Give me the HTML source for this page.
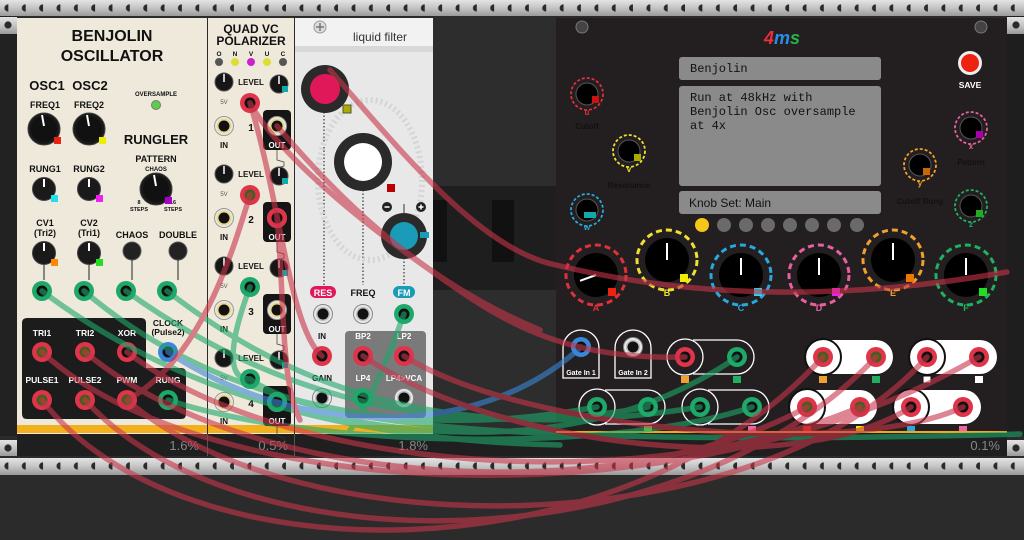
<!DOCTYPE html>
<html><head><meta charset="utf-8"><style>
html,body{margin:0;padding:0;background:#2a2a2a;width:1024px;height:540px;overflow:hidden}
svg{display:block}
text{font-family:"Liberation Sans",sans-serif;font-weight:bold}
</style></head><body>
<svg width="1024" height="540" viewBox="0 0 1024 540" xmlns="http://www.w3.org/2000/svg">
<defs>
<pattern id="holes" x="-9" y="0" width="17.35" height="16" patternUnits="userSpaceOnUse"><circle cx="17" cy="8" r="3.6" fill="#2a2a2a"/></pattern>
<linearGradient id="rail" x1="0" y1="0" x2="0" y2="1"><stop offset="0" stop-color="#e4e4e4"/><stop offset=".5" stop-color="#c4c4c4"/><stop offset="1" stop-color="#9a9a9a"/></linearGradient>
<g id="jk"><circle r="9.5" fill="#e8e8e8" stroke="#888" stroke-width="1"/><circle r="7" fill="#bbb"/><circle r="5.5" fill="#111"/></g>
<g id="jky"><circle r="9.5" fill="#e8e8e8" stroke="#999"/><circle r="7.5" fill="#e8d98a"/><circle r="5.5" fill="#111"/></g>
<g id="pl"><circle r="10" fill="currentColor"/><circle r="5.5" fill="#111"/></g>
<g id="plg"><circle r="10" fill="currentColor"/><circle r="5.5" fill="#4a5d1e"/></g>
<g id="kb"><circle r="16" fill="#1a1a1a" stroke="#444"/><circle r="13" fill="#111"/><line x1="0" y1="-3" x2="-2" y2="-14" stroke="#fff" stroke-width="2"/></g>
<g id="ks"><circle r="11.5" fill="#1a1a1a" stroke="#444"/><line x1="0" y1="-2" x2="0" y2="-10" stroke="#fff" stroke-width="2"/></g>
<g id="kt"><circle r="9" fill="#161616" stroke="#555"/><line x1="0" y1="0" x2="0" y2="-8" stroke="#fff" stroke-width="1.5"/></g>
<g id="big"><circle r="22" fill="#000"/><line x1="0" y1="0" x2="0" y2="-17" stroke="#fff" stroke-width="2"/></g>
</defs>

<rect width="1024" height="540" fill="#2b2b2b"/>
<rect x="433" y="16" width="123" height="418" fill="#2d2d2d"/>
<rect x="433" y="186" width="123" height="104" fill="#1e1e1e"/>
<rect x="492" y="200" width="22" height="62" fill="#111"/>
<rect x="433" y="200" width="14" height="62" fill="#111"/>
<rect x="0" y="16" width="17" height="420" fill="#222"/>
<rect x="1007" y="16" width="17" height="420" fill="#1e1e1e"/>

<rect x="0" y="0" width="1024" height="16" fill="url(#rail)"/>
<rect x="0" y="0" width="1024" height="16" fill="url(#holes)"/>
<rect x="0" y="17" width="17" height="17" fill="url(#rail)"/><circle cx="8" cy="25" r="3.6" fill="#2a2a2a"/>
<rect x="1007" y="17" width="17" height="17" fill="url(#rail)"/><circle cx="1016" cy="25" r="3.6" fill="#2a2a2a"/>
<rect x="0" y="440" width="17" height="16" fill="url(#rail)"/><circle cx="8" cy="448" r="3.6" fill="#2a2a2a"/>
<rect x="1007" y="440" width="17" height="16" fill="url(#rail)"/><circle cx="1016" cy="448" r="3.6" fill="#2a2a2a"/>
<g transform="translate(0,458)"><rect x="0" y="0" width="1024" height="17" fill="url(#rail)"/><rect x="0" y="0" width="1024" height="16" fill="url(#holes)"/></g>

<rect x="17" y="434" width="990" height="22" fill="#1f1f1f"/>
<line x1="207.5" y1="434" x2="207.5" y2="456" stroke="#555"/><line x1="294.5" y1="434" x2="294.5" y2="456" stroke="#555"/>
<g font-size="13" fill="#888" text-anchor="end">
<text x="199" y="450" style="font-weight:normal">1.6%</text><text x="288" y="450" style="font-weight:normal">0.5%</text><text x="428" y="450" style="font-weight:normal">1.8%</text><text x="1000" y="450" style="font-weight:normal">0.1%</text></g>

<!-- BENJOLIN -->
<rect x="17" y="18" width="190" height="416" fill="#efe9dc"/>
<rect x="17" y="425" width="190" height="8" fill="#f2b01e"/>
<g text-anchor="middle" fill="#111">
<text x="112" y="41" font-size="16">BENJOLIN</text><text x="112" y="61" font-size="16">OSCILLATOR</text>
<text x="47" y="90" font-size="13">OSC1</text><text x="90" y="90" font-size="13">OSC2</text>
<text x="45" y="108" font-size="9">FREQ1</text><text x="89" y="108" font-size="9">FREQ2</text>
<text x="156" y="96" font-size="6">OVERSAMPLE</text>
<text x="156" y="144" font-size="13">RUNGLER</text>
<text x="156" y="162" font-size="9">PATTERN</text><text x="156" y="171" font-size="6">CHAOS</text>
<text x="139" y="204" font-size="5.5">8</text><text x="139" y="211" font-size="5.5">STEPS</text>
<text x="173" y="204" font-size="5.5">16</text><text x="173" y="211" font-size="5.5">STEPS</text>
<text x="45" y="172" font-size="9">RUNG1</text><text x="89" y="172" font-size="9">RUNG2</text>
<text x="45" y="226" font-size="9">CV1</text><text x="45" y="236" font-size="9">(Tri2)</text>
<text x="89" y="226" font-size="9">CV2</text><text x="89" y="236" font-size="9">(Tri1)</text>
<text x="132" y="238" font-size="9">CHAOS</text><text x="178" y="238" font-size="9">DOUBLE</text>
</g>
<circle cx="156" cy="105" r="4.5" fill="#5ccf4a" stroke="#777"/>
<use href="#kb" x="44" y="129"/><rect x="54" y="137" width="7" height="7" fill="#e21"/>
<use href="#kb" x="89" y="129"/><rect x="99" y="137" width="7" height="7" fill="#ee0"/>
<use href="#kb" x="156" y="189"/><rect x="165" y="197" width="7" height="7" fill="#a0c"/>
<use href="#ks" x="44" y="189"/><rect x="51" y="195" width="7" height="7" fill="#2de"/>
<use href="#ks" x="89" y="189"/><rect x="96" y="195" width="7" height="7" fill="#e2e"/>
<use href="#ks" x="44" y="253"/><rect x="51" y="259" width="7" height="7" fill="#f80"/>
<use href="#ks" x="89" y="253"/><rect x="96" y="259" width="7" height="7" fill="#2d2"/>
<circle cx="132" cy="251" r="9" fill="#222" stroke="#555"/><circle cx="178" cy="251" r="9" fill="#222" stroke="#555"/>
<g stroke="#222"><line x1="44" y1="265" x2="44" y2="280"/><line x1="89" y1="265" x2="89" y2="280"/><line x1="132" y1="260" x2="132" y2="280"/><line x1="178" y1="260" x2="178" y2="280"/></g>
<g style="color:#1ea86a"><use href="#pl" x="42" y="291"/><use href="#pl" x="84" y="291"/><use href="#pl" x="126" y="291"/><use href="#pl" x="167" y="291"/></g>
<path d="M27,318 H141 Q146,318 146,323 V368 H181 Q186,368 186,373 V414 Q186,419 181,419 H27 Q22,419 22,414 V323 Q22,318 27,318Z" fill="#1c1c1c"/>
<g text-anchor="middle" fill="#fff" font-size="8.5">
<text x="42" y="336">TRI1</text><text x="85" y="336">TRI2</text><text x="127" y="336">XOR</text>
<text x="42" y="383">PULSE1</text><text x="85" y="383">PULSE2</text><text x="127" y="383">PWM</text><text x="168" y="383">RUNG</text>
<text x="168" y="326" fill="#111">CLOCK</text><text x="168" y="335" fill="#111">(Pulse2)</text></g>
<g style="color:#e0344a"><use href="#plg" x="42" y="352"/><use href="#plg" x="85" y="352"/><use href="#pl" x="127" y="352"/>
<use href="#plg" x="42" y="400"/><use href="#plg" x="85" y="400"/><use href="#plg" x="127" y="400"/></g>
<use href="#pl" x="168" y="352" style="color:#3a86d8"/>
<use href="#pl" x="168" y="400" style="color:#1ea86a"/>

<!-- QUAD VC -->
<rect x="208" y="18" width="86" height="416" fill="#efe9dc"/>
<rect x="208" y="425" width="86" height="8" fill="#f2b01e"/>
<g text-anchor="middle" fill="#111"><text x="251" y="33" font-size="12">QUAD VC</text><text x="251" y="45" font-size="12">POLARIZER</text>
<g font-size="6.5"><text x="219" y="56">O</text><text x="235" y="56">N</text><text x="251" y="56">V</text><text x="267" y="56">U</text><text x="283" y="56">C</text></g></g>
<circle cx="219" cy="62" r="4" fill="#555"/><circle cx="235" cy="62" r="4" fill="#dd3"/><circle cx="251" cy="62" r="4" fill="#c2c"/><circle cx="267" cy="62" r="4" fill="#dd3"/><circle cx="283" cy="62" r="4" fill="#555"/>
<g id="qs">
<use href="#kt" x="224" y="82"/><text x="251" y="85" font-size="8" text-anchor="middle" fill="#111">LEVEL</text>
<use href="#kt" x="279" y="84"/><rect x="282" y="86" width="6" height="6" fill="#1aa"/>
<text x="224" y="104" font-size="6" text-anchor="middle" fill="#555" style="font-weight:normal">5V</text>
<use href="#jky" x="224" y="126"/><text x="224" y="148" font-size="8" text-anchor="middle" fill="#111">IN</text>
<rect x="263" y="110" width="28" height="40" rx="4" fill="#151515"/><use href="#jky" x="277" y="126"/>
<text x="277" y="148" font-size="8" text-anchor="middle" fill="#fff">OUT</text>
<path d="M277,150 V160 L284,162 V166 L277,168 V178" stroke="#333" fill="none" stroke-width=".7"/>
</g>
<use href="#qs" y="92"/><use href="#qs" y="184"/><use href="#qs" y="276"/>
<g font-size="10" text-anchor="middle" fill="#111"><text x="251" y="131">1</text><text x="251" y="223">2</text><text x="251" y="315">3</text><text x="251" y="407">4</text></g>
<use href="#pl" x="250" y="103" style="color:#e0344a"/><use href="#plg" x="250" y="195" style="color:#e0344a"/>
<use href="#pl" x="277" y="218" style="color:#e0344a"/>
<use href="#pl" x="250" y="287" style="color:#1ea86a"/><use href="#pl" x="250" y="379" style="color:#1ea86a"/>
<use href="#pl" x="277" y="402" style="color:#1ea86a"/>

<!-- LIQUID FILTER -->
<rect x="295" y="18" width="138" height="416" fill="#e8e8e8"/>
<rect x="295" y="18" width="138" height="28" fill="#f2f2f2"/><rect x="295" y="46" width="138" height="6" fill="#d8d8d8"/>
<text x="380" y="41" font-size="12" text-anchor="middle" fill="#333" style="font-weight:normal">liquid filter</text>
<circle cx="320" cy="27" r="6" fill="#ddd" stroke="#999"/><path d="M316,27h8M320,23v8" stroke="#777" stroke-width="1.5"/>
<g stroke="#333" stroke-width="1.2" stroke-dasharray="1.5 2"><line x1="324" y1="112" x2="324" y2="285"/><line x1="363" y1="190" x2="363" y2="285"/><line x1="404" y1="258" x2="404" y2="285"/></g>
<ellipse cx="370" cy="180" rx="52" ry="80" fill="none" stroke="#d5d5d5" stroke-width="6" stroke-dasharray="2 3"/>
<circle cx="325" cy="89" r="24" fill="#2a2a2a"/><circle cx="325" cy="89" r="15" fill="#e0185a"/><rect x="343" y="105" width="8" height="8" fill="#aa0" stroke="#553"/>
<circle cx="363" cy="162" r="29" fill="#2a2a2a"/><circle cx="363" cy="162" r="19" fill="#fff"/><rect x="387" y="184" width="8" height="8" fill="#b00"/>
<circle cx="404" cy="236" r="23" fill="#2a2a2a"/><circle cx="404" cy="236" r="14" fill="#1a9cb8"/><rect x="420" y="232" width="9" height="6" fill="#1a9cb8"/>
<circle cx="387" cy="207" r="5" fill="#222"/><path d="M384.5,207h5" stroke="#fff" stroke-width="1.5"/>
<circle cx="421" cy="207" r="5" fill="#222"/><path d="M418.5,207h5M421,204.5v5" stroke="#fff" stroke-width="1.5"/>
<line x1="404" y1="204" x2="404" y2="214" stroke="#333"/>
<rect x="310" y="286" width="26" height="12" rx="6" fill="#e0185a"/><text x="323" y="296" font-size="9" text-anchor="middle" fill="#fff">RES</text>
<text x="363" y="296" font-size="9" text-anchor="middle" fill="#111">FREQ</text>
<rect x="393" y="286" width="22" height="12" rx="6" fill="#1a9cb8"/><text x="404" y="296" font-size="9" text-anchor="middle" fill="#fff">FM</text>
<rect x="345" y="331" width="81" height="87" rx="4" fill="#7a7a7a"/>
<use href="#jk" x="323" y="314"/><use href="#jk" x="363" y="314"/><use href="#pl" x="404" y="314" style="color:#1ea86a"/>
<g font-size="8" text-anchor="middle"><text x="322" y="339" fill="#111">IN</text><text x="363" y="339" fill="#fff">BP2</text><text x="404" y="339" fill="#fff">LP2</text>
<text x="322" y="381" fill="#111">GAIN</text><text x="363" y="381" fill="#fff">LP4</text><text x="404" y="381" fill="#fff">LP4&gt;VCA</text></g>
<g style="color:#e0344a"><use href="#pl" x="322" y="356"/><use href="#pl" x="363" y="356"/><use href="#pl" x="404" y="356"/></g>
<use href="#jk" x="322" y="398"/><use href="#pl" x="363" y="398" style="color:#1ea86a"/><use href="#jk" x="404" y="398"/>
<rect x="295" y="425" width="138" height="8" fill="#f2b01e"/>

<!-- 4MS -->
<rect x="556" y="18" width="451" height="416" fill="#231f20"/>
<rect x="556" y="431" width="451" height="2" fill="#f2a81e"/>
<circle cx="582" cy="27" r="6" fill="#444" stroke="#777"/><circle cx="981" cy="27" r="6" fill="#444" stroke="#777"/>
<text x="782" y="44" font-size="18" text-anchor="middle" font-style="italic"><tspan fill="#e8303a">4</tspan><tspan fill="#2a8ee8">m</tspan><tspan fill="#27b24a">s</tspan></text>
<rect x="679" y="57" width="202" height="23" rx="3" fill="#8a8a8a"/>
<rect x="679" y="86" width="202" height="100" rx="3" fill="#8a8a8a"/>
<rect x="679" y="191" width="202" height="23" rx="3" fill="#8a8a8a"/>
<g font-size="12" fill="#111"><text x="690" y="72" style="font-family:'Liberation Mono';font-weight:normal">Benjolin</text>
<text x="690" y="101" style="font-family:'Liberation Mono';font-weight:normal">Run at 48kHz with</text>
<text x="690" y="115" style="font-family:'Liberation Mono';font-weight:normal">Benjolin Osc oversample</text>
<text x="690" y="129" style="font-family:'Liberation Mono';font-weight:normal">at 4x</text>
<text x="689" y="207" style="font-family:'Liberation Sans';font-weight:normal">Knob Set:  Main</text></g>
<circle cx="702" cy="225" r="7" fill="#f5c518"/>
<g fill="#6a6a6a"><circle cx="724" cy="225" r="7"/><circle cx="746" cy="225" r="7"/><circle cx="768" cy="225" r="7"/><circle cx="790" cy="225" r="7"/><circle cx="812" cy="225" r="7"/><circle cx="834" cy="225" r="7"/><circle cx="857" cy="225" r="7"/></g>
<circle cx="970" cy="63" r="12" fill="#eee"/><circle cx="970" cy="63" r="9" fill="#e21"/>
<text x="970" y="88" font-size="8.5" text-anchor="middle" fill="#fff">SAVE</text>
<g fill="none" stroke-width="1.8" stroke-dasharray="3 2">
<circle cx="587" cy="94" r="16" stroke="#e0303a"/><circle cx="629" cy="151" r="16" stroke="#f0e030"/><circle cx="587" cy="210" r="16" stroke="#28a8e0"/>
<circle cx="971" cy="128" r="16" stroke="#e860a0"/><circle cx="920" cy="165" r="16" stroke="#f0a030"/><circle cx="971" cy="206" r="16" stroke="#20b060"/></g>
<g fill="#000" stroke="#555"><circle cx="587" cy="94" r="11"/><circle cx="629" cy="151" r="11"/><circle cx="587" cy="210" r="11"/><circle cx="971" cy="128" r="11"/><circle cx="920" cy="165" r="11"/><circle cx="971" cy="206" r="11"/></g>
<rect x="592" y="96" width="7" height="7" fill="#c11"/><rect x="634" y="154" width="7" height="7" fill="#aa0"/><rect x="584" y="212" width="12" height="6" fill="#1aa"/>
<rect x="976" y="131" width="7" height="7" fill="#a0a"/><rect x="923" y="168" width="7" height="7" fill="#c60"/><rect x="976" y="210" width="7" height="7" fill="#2a2"/>
<g font-size="8" text-anchor="middle"><text x="587" y="115" fill="#e0303a">u</text><text x="629" y="172" fill="#f0e030">v</text><text x="587" y="230" fill="#28a8e0">w</text>
<text x="971" y="149" fill="#e860a0">x</text><text x="920" y="186" fill="#f0a030">y</text><text x="971" y="227" fill="#20b060">z</text></g>
<g font-size="8" text-anchor="middle" fill="#111" style="font-weight:normal"><text x="587" y="129">Cutoff</text><text x="629" y="188">Resonance</text><text x="971" y="165">Pattern</text><text x="920" y="204">Cutoff Rung</text><text x="970" y="245" fill="#222">Cutoff CV</text></g>
<g fill="none" stroke-width="3" stroke-dasharray="6 4">
<circle cx="596" cy="275" r="30" stroke="#e0303a"/><circle cx="667" cy="260" r="30" stroke="#f0e030"/><circle cx="741" cy="275" r="30" stroke="#28a8e0"/>
<circle cx="819" cy="275" r="30" stroke="#e860a0"/><circle cx="893" cy="260" r="30" stroke="#f0a030"/><circle cx="966" cy="275" r="30" stroke="#20b060"/></g>
<use href="#big" x="596" y="275" transform="rotate(-110 596 275)"/><use href="#big" x="667" y="260"/><use href="#big" x="741" y="275"/><use href="#big" x="819" y="275"/><use href="#big" x="893" y="260"/><use href="#big" x="966" y="275"/>
<rect x="608" y="288" width="8" height="8" fill="#e21"/><rect x="680" y="274" width="8" height="8" fill="#ee0"/><rect x="754" y="288" width="8" height="8" fill="#2de"/>
<rect x="832" y="288" width="8" height="8" fill="#e2e"/><rect x="906" y="274" width="8" height="8" fill="#e70"/><rect x="979" y="288" width="8" height="8" fill="#2d2"/>
<g font-size="9" text-anchor="middle"><text x="596" y="311" fill="#e0303a">A</text><text x="667" y="296" fill="#f0e030">B</text><text x="741" y="311" fill="#28a8e0">C</text>
<text x="819" y="311" fill="#e860a0">D</text><text x="893" y="296" fill="#f0a030">E</text><text x="966" y="311" fill="#20b060">F</text></g>
<g fill="none" stroke="#fff" stroke-width="1.3">
<path d="M563,378 V348 A18,18 0 0 1 599,348 V378 Z"/><path d="M615,378 V348 A18,18 0 0 1 651,348 V378 Z"/>
<circle cx="685" cy="357" r="18"/><path d="M693,340 H737 A17,17 0 0 1 737,374 H693"/>
<circle cx="597" cy="407" r="18"/><path d="M605,390 H648 A17,17 0 0 1 648,424 H605"/>
<circle cx="700" cy="407" r="18"/><path d="M708,390 H752 A17,17 0 0 1 752,424 H708"/></g>
<g fill="#fff">
<rect x="806" y="340" width="87" height="34" rx="17"/><rect x="910" y="340" width="87" height="34" rx="17"/>
<rect x="790" y="390" width="87" height="34" rx="17"/><rect x="894" y="390" width="87" height="34" rx="17"/></g>
<g fill="none" stroke="#111" stroke-width="2"><circle cx="823" cy="357" r="18"/><circle cx="927" cy="357" r="18"/><circle cx="807" cy="407" r="18"/><circle cx="911" cy="407" r="18"/></g>
<text x="581" y="375" font-size="7" text-anchor="middle" fill="#fff">Gate In 1</text><text x="633" y="375" font-size="7" text-anchor="middle" fill="#fff">Gate In 2</text>
<use href="#pl" x="581" y="347" style="color:#3a86d8"/><use href="#jk" x="633" y="347"/>
<use href="#pl" x="685" y="357" style="color:#e0344a"/><use href="#pl" x="737" y="357" style="color:#1ea86a"/>
<use href="#pl" x="597" y="407" style="color:#1ea86a"/><use href="#pl" x="648" y="407" style="color:#1ea86a"/>
<use href="#pl" x="700" y="407" style="color:#1ea86a"/><use href="#pl" x="752" y="407" style="color:#1ea86a"/>
<g style="color:#e0344a"><use href="#plg" x="823" y="357"/><use href="#plg" x="876" y="357"/><use href="#pl" x="927" y="357"/><use href="#pl" x="979" y="357"/>
<use href="#plg" x="807" y="407"/><use href="#plg" x="860" y="407"/><use href="#pl" x="911" y="407"/><use href="#pl" x="963" y="407"/></g>
<g><rect x="681" y="376" width="8" height="7" fill="#f0a030"/><rect x="733" y="376" width="8" height="7" fill="#20b060"/>
<rect x="819" y="376" width="8" height="7" fill="#f0a030"/><rect x="872" y="376" width="8" height="7" fill="#20b060"/><rect x="923" y="376" width="8" height="7" fill="#fff" stroke="#111"/><rect x="975" y="376" width="8" height="7" fill="#fff"/>
<rect x="644" y="426" width="8" height="5" fill="#8c3"/><rect x="748" y="426" width="8" height="5" fill="#e6a"/><rect x="803" y="426" width="8" height="5" fill="#e21"/><rect x="856" y="426" width="8" height="5" fill="#ee0"/><rect x="907" y="426" width="8" height="5" fill="#28a8e0"/><rect x="959" y="426" width="8" height="5" fill="#e6a"/></g>

<!-- cables -->
<g fill="none" stroke-width="5.5" stroke-linecap="round" opacity=".6">
<g stroke="#1ea86a">
<path d="M42,291 C160,380 320,440 560,445"/>
<path d="M84,291 C200,390 380,448 597,407"/>
<path d="M126,291 C250,380 420,448 648,407"/>
<path d="M167,291 C270,370 420,452 700,407"/>
<path d="M168,400 C320,450 620,452 752,407"/>
<path d="M250,287 C230,340 225,380 250,379"/>
<path d="M404,314 C380,380 360,420 350,430"/>
<path d="M277,402 C420,445 600,452 737,357"/>
<path d="M250,379 C320,430 560,446 1020,434"/>
</g>
<path stroke="#3a86d8" d="M168,352 C300,440 480,440 581,347"/>
<g stroke="#c8354a">
<path d="M250,103 C270,140 330,200 430,270 C500,320 560,360 685,357"/>
<path d="M277,126 C340,200 420,280 540,330"/>
<path d="M330,70 C400,150 480,250 556,265 C700,300 850,300 1007,272"/>
<path d="M42,400 C180,580 620,580 823,357"/>
<path d="M85,400 C240,570 680,565 876,357"/>
<path d="M127,400 C300,550 760,545 927,357"/>
<path d="M42,352 C200,500 680,530 979,357"/>
<path d="M85,352 C250,490 620,510 807,407"/>
<path d="M127,352 C280,470 640,500 860,407"/>
<path d="M250,195 C230,260 200,360 127,400"/>
<path d="M277,218 C285,300 280,380 300,420"/>
<path d="M322,356 C290,330 280,200 250,103"/>
<path d="M363,356 C500,450 800,480 911,407"/>
<path d="M404,356 C520,430 850,460 963,407"/>
</g>
</g>
</svg>
</body></html>
